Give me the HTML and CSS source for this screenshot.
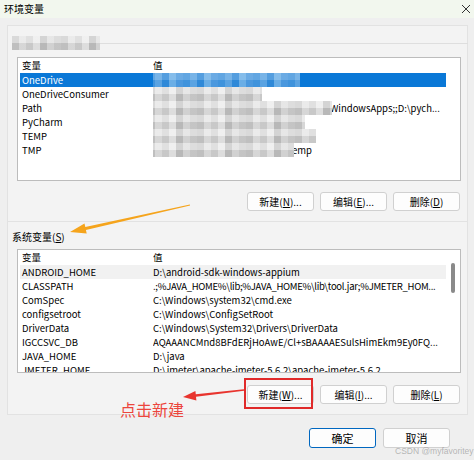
FILE: index.html
```html
<!DOCTYPE html>
<html lang="zh-CN">
<head>
<meta charset="utf-8">
<title>环境变量</title>
<link rel="stylesheet" href="styles.css">
</head>
<body>
<div class="titlebar">
  <span class="title">环境变量</span>
  <svg class="close" width="10" height="10" viewBox="0 0 10 10"><path d="M1 1L9 9M9 1L1 9" stroke="#333" stroke-width="1" fill="none"/></svg>
</div>
<div class="main">
  <div class="group user">
    <div class="label-row"><span class="mosaic label-blur"></span><span class="label-line"></span></div>
    <div class="list">
      <div class="rows">
        <div class="row head"><span class="name">变量</span><span class="val">值</span></div>
        <div class="row sel"><span class="name">OneDrive</span><span class="val"><i class="mosaic blue w152"></i></span></div>
        <div class="row"><span class="name">OneDriveConsumer</span><span class="val"><i class="mosaic w114"></i></span></div>
        <div class="row"><span class="name">Path</span><span class="val"><i class="mosaic w184"></i><span class="tail">WindowsApps;;D:\pych...</span></span></div>
        <div class="row"><span class="name">PyCharm</span><span class="val"><i class="mosaic w157"></i></span></div>
        <div class="row"><span class="name">TEMP</span><span class="val"><i class="mosaic w168"></i></span></div>
        <div class="row"><span class="name">TMP</span><span class="val"><i class="mosaic w146"></i><span class="tail">emp</span></span></div>
      </div>
      <div class="scroll"></div>
    </div>
    <div class="btns">
      <span class="btn">新建(<u>N</u>)...</span>
      <span class="btn">编辑(<u>E</u>)...</span>
      <span class="btn">删除(<u>D</u>)</span>
    </div>
  </div>
  <div class="group sys">
    <div class="sys-label">系统变量(<u>S</u>)</div>
    <div class="list">
      <div class="rows">
        <div class="row head"><span class="name">变量</span><span class="val">值</span></div>
        <div class="row hover"><span class="name">ANDROID_HOME</span><span class="val">D:\android-sdk-windows-appium</span></div>
        <div class="row"><span class="name">CLASSPATH</span><span class="val tight">.;%JAVA_HOME%\lib;%JAVA_HOME%\lib\tool.jar;%JMETER_HOM...</span></div>
        <div class="row"><span class="name">ComSpec</span><span class="val">C:\Windows\system32\cmd.exe</span></div>
        <div class="row"><span class="name">configsetroot</span><span class="val">C:\Windows\ConfigSetRoot</span></div>
        <div class="row"><span class="name">DriverData</span><span class="val">C:\Windows\System32\Drivers\DriverData</span></div>
        <div class="row"><span class="name">IGCCSVC_DB</span><span class="val">AQAAANCMnd8BFdERjHoAwE/Cl+sBAAAAESulsHimEkm9Ey0FQ...</span></div>
        <div class="row"><span class="name">JAVA_HOME</span><span class="val">D:\java</span></div>
        <div class="row"><span class="name">JMETER_HOME</span><span class="val">D:\jmeter\apache-jmeter-5.6.2\apache-jmeter-5.6.2</span></div>
      </div>
      <div class="scroll"><div class="thumb"></div></div>
    </div>
    <div class="btns">
      <span class="btn">新建(<u>W</u>)...</span>
      <span class="btn">编辑(<u>I</u>)...</span>
      <span class="btn">删除(<u>L</u>)</span>
    </div>
  </div>
  <div class="footer">
    <span class="btn big default">确定</span>
    <span class="btn big">取消</span>
  </div>
</div>

<svg class="annot" width="474" height="460" viewBox="0 0 474 460">
  <polygon fill="#f5a41c" points="70,232 84.5,223.6 85.3,227 189.9,204.5 190.1,205.5 85.9,230 86.7,233.4"/>
  <polygon fill="#e8342e" points="183,397 195.4,391 195.8,394.3 243.9,389.2 244.1,390.8 196,396.7 196.4,400.5"/>
  <rect x="245" y="379" width="67" height="29" fill="none" stroke="#e02a2a" stroke-width="2"/>
</svg>
<div class="note">点击新建</div>
<div class="watermark">CSDN @myfavoritey</div>
</body>
</html>
```

FILE: styles.css
```css
* { box-sizing: border-box; }
html, body { margin: 0; }
body {
  width: 474px;
  height: 460px;
  overflow: hidden;
  position: relative;
  background: #efefef;
  font-family: "Noto Sans CJK SC", "Noto Sans", sans-serif;
  font-size: 10px;
  color: #000;
}
u { text-decoration: underline; text-underline-offset: 1px; }

.titlebar {
  height: 18px;
  background: #f2f7ee;
  display: flex;
  align-items: center;
  justify-content: space-between;
  padding: 0 3px 0 4px;
}
.title { font-size: 10px; line-height: 12px; }
.close { display: block; }

.main { padding: 7px 6px 0 7px; }

.group {
  border: 1px solid #e2e2e2;
  background: #f3f3f3;
  padding: 12px 6px 10px 9px;
}
.group.sys { border-top: 0; padding-top: 10px; }

.label-row {
  display: flex;
  align-items: center;
  height: 10px;
  margin-left: -5px;
  margin-right: -7px;
}
.label-blur { width: 88px; height: 10px; flex: none; }
.label-line { flex: 1; height: 1px; background: #dedede; }

.sys-label { height: 10px; line-height: 10px; margin-left: -5px; }

.list {
  margin-top: 9px;
  height: 124px;
  border: 1px solid #bcbcbc;
  background: #fff;
  display: flex;
  overflow: hidden;
  font-size: 9.5px;
}
.sys .list { margin-top: 7px; }
.rows { flex: 1; padding-left: 2px; min-width: 0; }
.scroll { width: 14px; flex: none; }
.thumb {
  width: 4px;
  height: 30px;
  margin: 13px 0 0 5px;
  background: #8a8a8a;
  border-radius: 2px;
}

.row {
  height: 14px;
  line-height: 14px;
  display: flex;
  align-items: center;
  white-space: nowrap;
}
.row.head { height: 15px; line-height: 15px; }
.row.sel { background: #0a78d7; color: #fff; }
.row.hover { background: #f1f1f1; }
.name { width: 133px; flex: none; padding-left: 2px; overflow: hidden; }
.val { flex: 1; display: flex; align-items: center; overflow: hidden; min-width: 0; }
.val.tight { letter-spacing: -0.3px; }
.tail { margin-left: -2px; }

.mosaic {
  display: block;
  flex: none;
  height: 14px;
  margin-left: -5px;
  background:
    linear-gradient(180deg, rgba(255,255,255,0.3) 0 50%, rgba(0,0,0,0.05) 50% 100%),
    repeating-linear-gradient(90deg, #c9c9c9 0 7px, #e2e2e2 7px 14px, #d3d3d3 14px 21px, #e9e9e9 21px 28px, #c2c2c2 28px 35px, #dcdcdc 35px 42px, #cfcfcf 42px 49px);
  filter: blur(0.7px);
}
.label-blur { margin-left: 0; }
.mosaic.blue {
  background:
    linear-gradient(180deg, rgba(255,255,255,0.18) 0 50%, rgba(0,0,0,0) 50% 100%),
    repeating-linear-gradient(90deg, #3f93dc 0 7px, #5aa3e2 7px 14px, #2f89d8 14px 21px, #6aaee6 21px 28px, #4a98de 28px 35px);
}
.w152 { width: 152px; }
.w114 { width: 114px; }
.w184 { width: 184px; }
.w157 { width: 157px; }
.w168 { width: 168px; }
.w146 { width: 146px; }

.btns {
  display: flex;
  justify-content: flex-end;
  gap: 6px;
  margin-top: 11px;
  margin-right: 1px;
}
.sys .btns { margin-top: 12px; }
.btn {
  width: 67px;
  height: 19px;
  border: 1px solid #d0d0d0;
  border-radius: 3px;
  background: #fdfdfd;
  display: flex;
  align-items: center;
  justify-content: center;
  font-size: 10px;
  line-height: 12px;
}
.footer {
  display: flex;
  justify-content: flex-end;
  gap: 7px;
  padding: 13px 18px 0 0;
}
.btn.big { height: 20px; font-size: 11px; }
.btn.default { border-color: #0067c0; }

.annot { position: absolute; left: 0; top: 0; pointer-events: none; }
.note {
  position: absolute;
  left: 120px;
  top: 400px;
  font-size: 16px;
  line-height: 18px;
  color: #ec463c;
}
.watermark {
  position: absolute;
  left: 395px;
  top: 446px;
  font-family: "Liberation Sans", sans-serif;
  font-size: 8.5px;
  line-height: 10px;
  color: rgba(140, 140, 140, 0.6);
}
```
